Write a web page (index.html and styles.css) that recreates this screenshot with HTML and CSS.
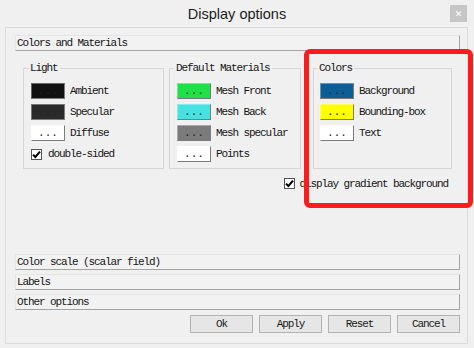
FILE: index.html
```html
<!DOCTYPE html>
<html>

<head>
    <title>Display options</title>
    <link rel="stylesheet" href="styles.css">
</head>

<body>
    <div class="window">
        <div class="titlebar">
            <span></span>
            <span class="title">Display options</span>
            <span class="close">&#x2715;</span>
        </div>

        <div class="panel">
            <div class="section-head">Colors and Materials</div>

            <div class="groups">
                <fieldset class="group group-light">
                    <legend>Light</legend>
                    <div class="row"><span class="swatch c-ambient">...</span>Ambient</div>
                    <div class="row"><span class="swatch c-specular">...</span>Specular</div>
                    <div class="row"><span class="swatch c-white">...</span>Diffuse</div>
                    <div class="row">
                        <span class="check"><svg width="9" height="9" viewBox="0 0 9 9"><path d="M1 4.6 L3.4 7 L8 1.6" fill="none" stroke="#000" stroke-width="2"/></svg></span>
                        <span class="check-label">double-sided</span>
                    </div>
                </fieldset>

                <fieldset class="group group-default">
                    <legend>Default Materials</legend>
                    <div class="row"><span class="swatch c-front">...</span>Mesh Front</div>
                    <div class="row"><span class="swatch c-back">...</span>Mesh Back</div>
                    <div class="row"><span class="swatch c-mspec">...</span>Mesh specular</div>
                    <div class="row"><span class="swatch c-white">...</span>Points</div>
                </fieldset>

                <fieldset class="group group-colors">
                    <legend>Colors</legend>
                    <div class="row"><span class="swatch c-bg">...</span>Background</div>
                    <div class="row"><span class="swatch c-bbox">...</span>Bounding-box</div>
                    <div class="row"><span class="swatch c-white">...</span>Text</div>
                </fieldset>
            </div>

            <div class="gradient-row">
                <span class="check"><svg width="9" height="9" viewBox="0 0 9 9"><path d="M1 4.6 L3.4 7 L8 1.6" fill="none" stroke="#000" stroke-width="2"/></svg></span>
                <span>display gradient background</span>
            </div>

            <div class="lower">
                <div class="section-head">Color scale (scalar field)</div>
                <div class="section-head">Labels</div>
                <div class="section-head">Other options</div>
            </div>

            <div class="buttons">
                <button class="btn">Ok</button>
                <button class="btn">Apply</button>
                <button class="btn">Reset</button>
                <button class="btn">Cancel</button>
            </div>
        </div>

        <!-- red annotation frame over the Colors group -->
        <div class="highlight"></div>
    </div>
</body>

</html>
```

FILE: styles.css
```css
body {
    margin: 0;
    font-family: "Liberation Mono", "DejaVu Sans Mono", monospace;
    font-size: 11px;
    letter-spacing: -1.1px;
    color: #151515;
    background-color: #f0f0f0;
}

.window {
    width: 474px;
    height: 348px;
    position: relative;
    background-color: #f0f0f0;
    overflow: hidden;
}

.titlebar {
    height: 27px;
    display: grid;
    grid-template-columns: 1fr auto 1fr;
    align-items: center;
}

.title {
    font-family: "Liberation Sans", Arial, sans-serif;
    font-size: 14.5px;
    letter-spacing: 0;
    color: #1c1c1c;
}

.close {
    justify-self: end;
    margin-right: 7px;
    width: 17px;
    height: 17px;
    background-color: #c6c6c6;
    color: #fff;
    font-family: "DejaVu Sans", sans-serif;
    font-size: 9px;
    font-weight: bold;
    letter-spacing: 0;
    display: flex;
    align-items: center;
    justify-content: center;
}

.panel {
    margin-left: 5px;
    width: 463px;
    height: 317px;
    box-sizing: border-box;
    border: 1px solid #dadada;
    padding: 7px 7px 10px 9px;
    display: flex;
    flex-direction: column;
}

.section-head {
    height: 16px;
    box-sizing: border-box;
    border: 1px solid;
    border-color: #e4e4e4 #a4a4a4 #a4a4a4 #e4e4e4;
    background-color: #f2f2f2;
    padding-left: 1px;
    line-height: 14px;
    white-space: nowrap;
}

/* group boxes */
.groups {
    margin-top: 11px;
    padding-left: 8px;
    display: flex;
    align-items: stretch;
}

.group {
    margin: 0;
    box-sizing: border-box;
    border: 1px solid #d6d6d6;
    padding: 9px 6px 6px 7px;
    display: flex;
    flex-direction: column;
    gap: 5px;
    min-width: 0;
}

.group legend {
    padding: 0 2px;
    margin-left: -3px;
    line-height: 12px;
}

.group-light {
    width: 141px;
}

.group-default {
    width: 132px;
    margin-left: 5px;
}

.group-colors {
    width: 139px;
    margin-left: 12px;
    padding-left: 6px;
}

.row {
    height: 16px;
    display: flex;
    align-items: center;
    gap: 5px;
    white-space: nowrap;
}

.swatch {
    width: 34px;
    height: 16px;
    box-sizing: border-box;
    border: 1px solid;
    border-color: rgba(255, 255, 255, 0.35) #7c7c7c #7c7c7c rgba(255, 255, 255, 0.35);
    text-align: center;
    line-height: 15px;
    color: #222;
    letter-spacing: 0;
    flex-shrink: 0;
}

.c-ambient { background-color: #111111; }
.c-specular { background-color: #2b2b2b; }
.c-white { background-color: #ffffff; }
.c-front { background-color: #20e048; }
.c-back { background-color: #46e2e2; }
.c-mspec { background-color: #7b7b7b; }
.c-bg { background-color: #0c5e96; }
.c-bbox { background-color: #ffff00; }

.check {
    width: 11px;
    height: 11px;
    box-sizing: border-box;
    border: 1px solid #555;
    background-color: #fff;
    display: flex;
    align-items: center;
    justify-content: center;
    flex-shrink: 0;
}

.check-label {
    margin-left: 1px;
}

.gradient-row {
    margin-top: 8px;
    height: 13px;
    padding-right: 12px;
    display: flex;
    justify-content: flex-end;
    align-items: center;
    gap: 4px;
    white-space: nowrap;
}

.lower {
    margin-top: auto;
    display: flex;
    flex-direction: column;
    gap: 4px;
}

.buttons {
    margin-top: 5px;
    display: flex;
    justify-content: flex-end;
    gap: 6px;
}

.btn {
    width: 63px;
    height: 18px;
    padding: 0;
    border: 1px solid #b2b2b2;
    background-color: #e6e6e6;
    font-family: "Liberation Mono", "DejaVu Sans Mono", monospace;
    font-size: 11px;
    letter-spacing: -1.1px;
    color: #1a1a1a;
}

.highlight {
    position: absolute;
    left: 304px;
    top: 49px;
    width: 169px;
    height: 159px;
    box-sizing: border-box;
    border: 5px solid #fd1c1c;
    border-radius: 6px;
}
```
